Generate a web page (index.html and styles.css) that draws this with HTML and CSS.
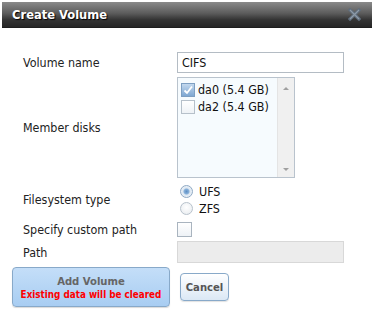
FILE: index.html
```html
<!DOCTYPE html>
<html>
<head>
<meta charset="utf-8">
<link rel="stylesheet" href="styles.css">
</head>
<body>
<div class="dialog">
  <div class="titlebar">
    <span class="title">Create Volume</span>
    <span class="close">
      <svg width="13" height="13" viewBox="0 0 13 13"><path d="M2 2 L11 11 M11 2 L2 11" stroke="#5f6d7c" stroke-width="3.2" stroke-linecap="square"/><path d="M2 2 L11 11 M11 2 L2 11" stroke="#8d9aa8" stroke-width="1.2"/></svg>
    </span>
  </div>
  <div class="form">
    <div class="label">Volume name</div>
    <div class="field"><div class="input">CIFS</div></div>

    <div class="label">Member disks</div>
    <div class="field">
      <div class="listbox">
        <div class="options">
          <div class="opt"><span class="cb checked"><svg width="12" height="12" viewBox="0 0 12 12"><path d="M2.5 6.5 L5 9 L10 2.5" fill="none" stroke="#fff" stroke-width="1.8"/></svg></span>da0 (5.4 GB)</div>
          <div class="opt"><span class="cb"></span>da2 (5.4 GB)</div>
        </div>
        <div class="scroll">
          <span class="arr up"></span>
          <span class="arr down"></span>
        </div>
      </div>
    </div>

    <div class="label">Filesystem type</div>
    <div class="field radios">
      <div class="radio-row"><span class="radio on"></span>UFS</div>
      <div class="radio-row"><span class="radio"></span>ZFS</div>
    </div>

    <div class="label">Specify custom path</div>
    <div class="field"><span class="cb big"></span></div>

    <div class="label">Path</div>
    <div class="field"><div class="input disabled"></div></div>
  </div>
  <div class="buttons">
    <button class="btn primary"><span class="btn-main">Add Volume</span><span class="btn-warn">Existing data will be cleared</span></button>
    <button class="btn cancel">Cancel</button>
  </div>
</div>
</body>
</html>
```

FILE: styles.css
```css
html, body {
  margin: 0;
  padding: 0;
  background: #fff;
}
body {
  font-family: "DejaVu Sans Condensed", "DejaVu Sans", sans-serif;
  font-size: 12.4px;
  color: #222;
}
.dialog {
  width: 375px;
  height: 312px;
  padding-top: 2px;
  box-sizing: border-box;
}
.titlebar {
  margin: 0 3px 0 2px;
  height: 26px;
  box-sizing: border-box;
  background: linear-gradient(#8a8a8a 0%, #5c5c5c 45%, #353535 70%, #262626 100%);
  border-bottom: 1px solid #1e1e1e;
  display: flex;
  align-items: center;
  justify-content: space-between;
  padding: 0 11px 0 10px;
}
.title {
  color: #fff;
  font-weight: bold;
  font-size: 12.8px;
  text-shadow: 1px 1px 1px #000;
  letter-spacing: 0;
}
.close {
  display: flex;
}
.form {
  display: grid;
  grid-template-columns: 154px 167px;
  row-gap: 4px;
  align-items: center;
  padding: 24px 0 0 23px;
}
.label {
  color: #222;
}
.field {
  display: flex;
}
.input {
  width: 167px;
  height: 21px;
  box-sizing: border-box;
  border: 1px solid #b4bcc4;
  background: #fff;
  padding: 0 4px;
  display: flex;
  align-items: center;
  color: #111;
}
.input.disabled {
  height: 22px;
  background: #ececec;
  border-color: #d8d8d8;
}
.listbox {
  width: 118px;
  height: 101px;
  box-sizing: border-box;
  border: 1px solid #b9c3cd;
  background: #f6fbfe;
  display: flex;
}
.options {
  flex: 1;
  padding: 3px 0 0 3px;
}
.opt {
  display: flex;
  align-items: center;
  height: 17px;
  gap: 3px;
  color: #111;
}
.cb {
  width: 14px;
  height: 14px;
  box-sizing: border-box;
  border: 1px solid #b6c0ca;
  background: linear-gradient(#ffffff, #eef2f6);
  display: inline-flex;
  align-items: center;
  justify-content: center;
  flex: none;
}
.cb.checked {
  border-color: #7d9fc2;
  background: linear-gradient(#c2d8ee, #7ea7d2);
}
.cb.big {
  width: 15px;
  height: 15px;
  border-color: #a9b4bf;
  margin: 1px 0 0 0;
}
.scroll {
  width: 16px;
  border-left: 1px solid #e4e4e4;
  background: #f0f0f0;
  position: relative;
}
.arr {
  position: absolute;
  left: 5px;
  width: 0;
  height: 0;
  border-left: 3px solid transparent;
  border-right: 3px solid transparent;
}
.arr.up {
  top: 9px;
  border-bottom: 3px solid #a0a0a0;
}
.arr.down {
  bottom: 6px;
  border-top: 3px solid #a0a0a0;
}
.radios {
  flex-direction: column;
  padding-top: 1px;
}
.radio-row {
  display: flex;
  align-items: center;
  height: 17px;
  gap: 6px;
  padding-left: 3px;
  color: #111;
}
.radio {
  width: 13px;
  height: 13px;
  box-sizing: border-box;
  border-radius: 50%;
  border: 1px solid #b8c2cc;
  background: radial-gradient(circle at 50% 40%, #ffffff, #e6eaee);
  flex: none;
}
.radio.on {
  border-color: #8fa9c4;
  background: radial-gradient(circle, #5d8fc4 0, #88b1da 2.5px, #dce7f2 3.5px, #eef3f8 6px);
}
.buttons {
  display: flex;
  align-items: center;
  gap: 10px;
  padding: 4px 0 0 12px;
}
.btn {
  font-family: "DejaVu Sans Condensed", "DejaVu Sans", sans-serif;
  font-weight: bold;
  border-radius: 4px;
  border: 1px solid #88a9c9;
  box-sizing: border-box;
  margin: 0;
  padding: 0;
  cursor: pointer;
}
.btn.primary {
  width: 158px;
  height: 40px;
  background: linear-gradient(#c4def8, #a8cdf2);
  display: flex;
  flex-direction: column;
  align-items: center;
  justify-content: center;
  gap: 1px;
  box-shadow: 0 1px 1px rgba(0,0,0,0.15);
}
.btn-main {
  color: #666;
  font-size: 11.2px;
}
.btn-warn {
  color: #f00;
  font-size: 9.8px;
}
.btn.cancel {
  width: 49px;
  height: 28px;
  color: #555;
  font-size: 11.2px;
  background: linear-gradient(#ffffff, #dbe8f5);
  box-shadow: 0 1px 1px rgba(0,0,0,0.12);
}
```
